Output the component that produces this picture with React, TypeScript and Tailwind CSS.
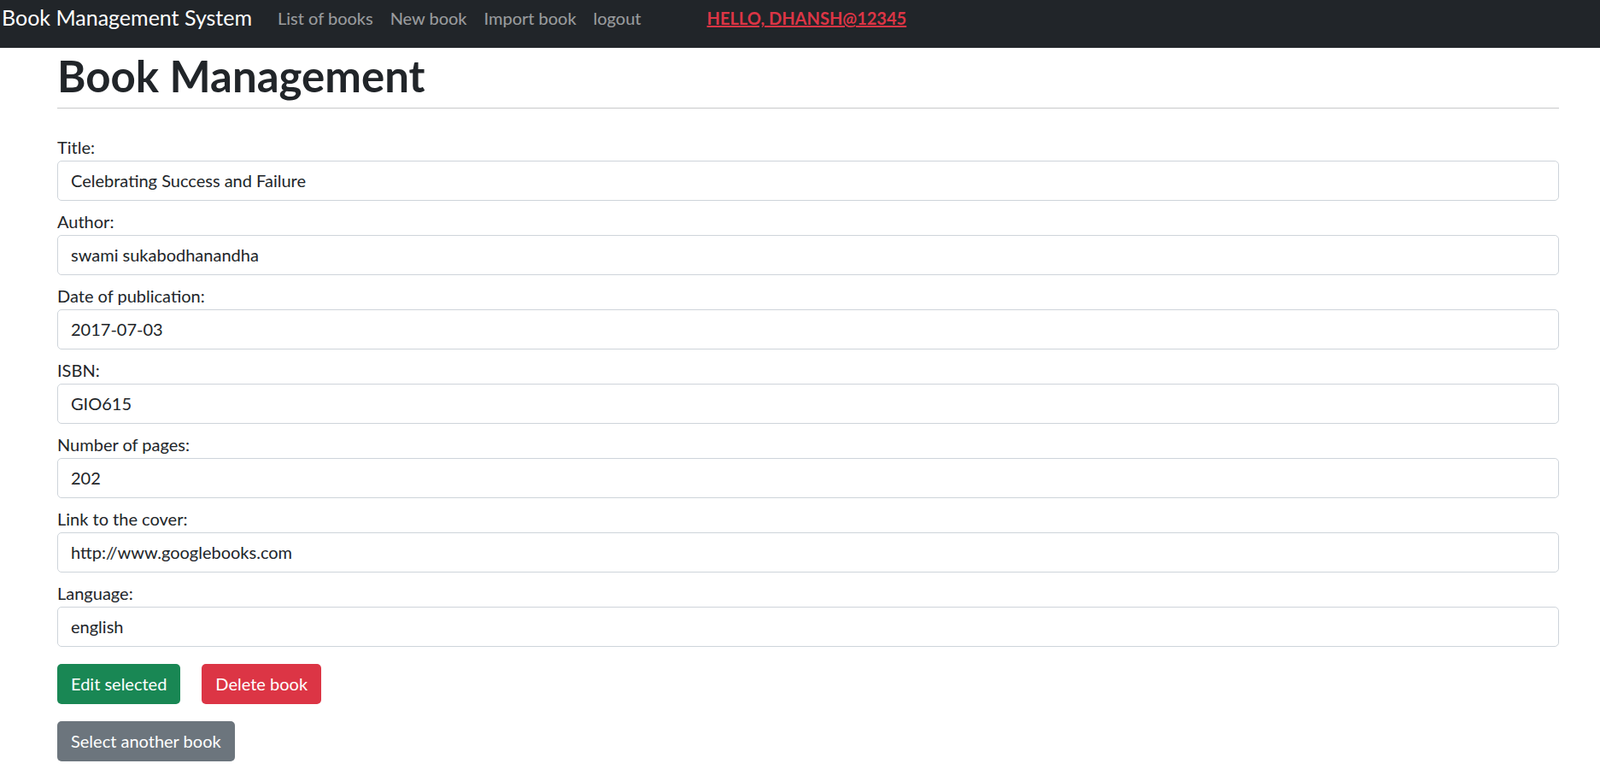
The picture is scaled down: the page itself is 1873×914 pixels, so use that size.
import React from "react";

const fields = [
	{ label: "Title:", value: "Celebrating Success and Failure" },
	{ label: "Author:", value: "swami sukabodhanandha" },
	{ label: "Date of publication:", value: "2017-07-03" },
	{ label: "ISBN:", value: "GIO615" },
	{ label: "Number of pages:", value: "202" },
	{ label: "Link to the cover:", value: "http://www.googlebooks.com" },
	{ label: "Language:", value: "english" },
];

const App = () => {
	return (
		<div className="min-h-screen bg-white text-[#212529] font-['Lato','Open_Sans',sans-serif]">
			<nav className="h-[56px] bg-[#212529] flex items-start">
				<span className="pl-[2px] pt-[2px] text-[25px] leading-[37px] text-white mr-[20px]">
					Book Management System
				</span>
				<div className="flex pt-[6px] text-[20px] leading-[30px]">
					<a className="px-[10px] text-white/55">List of books</a>
					<a className="px-[10px] text-white/55">New book</a>
					<a className="px-[10px] text-white/55">Import book</a>
					<a className="px-[10px] text-white/55">logout</a>
					<a className="ml-[67px] font-bold underline text-[#dc3545]">
						HELLO, DHANSH@12345
					</a>
				</div>
			</nav>

			<main className="pl-[67px] pr-[48px]">
				<h1 className="pt-[2px] text-[51px] leading-[62px] font-bold border-b border-[#c8c9ca] pb-[6px]">
					Book Management
				</h1>

				<form className="pt-[31px]">
					{fields.map((f) => (
						<div key={f.label} className="mb-[10px]">
							<label className="block text-[20px] leading-[28px] mb-[2px]">
								{f.label}
							</label>
							<input
								readOnly
								value={f.value}
								className="w-full h-[47px] px-[15px] pb-[2px] text-[20px] border border-[#ced4da] rounded-[5px] text-[#212529] outline-none"
							/>
						</div>
					))}

					<div className="flex gap-[25px] mt-[20px]">
						<button
							type="button"
							className="h-[47px] px-[16px] pb-[2px] rounded-[5px] bg-[#198754] text-white text-[20px]"
						>
							Edit selected
						</button>
						<button
							type="button"
							className="h-[47px] px-[16px] pb-[2px] rounded-[5px] bg-[#dc3545] text-white text-[20px]"
						>
							Delete book
						</button>
					</div>
					<div className="mt-[20px]">
						<button
							type="button"
							className="h-[47px] px-[16px] pb-[2px] rounded-[5px] bg-[#6c757d] text-white text-[20px]"
						>
							Select another book
						</button>
					</div>
				</form>
			</main>
		</div>
	);
};

export default App;
